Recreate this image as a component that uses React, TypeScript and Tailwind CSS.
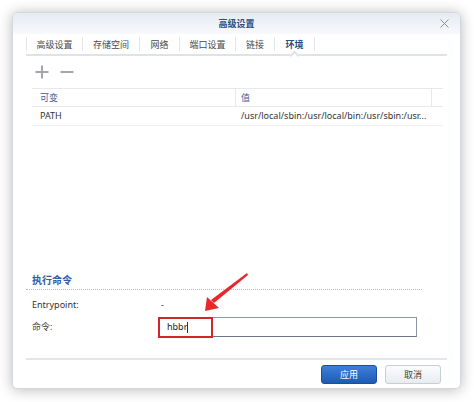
import React from 'react';

const font = { fontFamily: '"Noto Sans", "Noto Sans CJK SC", sans-serif' };

const tabs = [
  { label: '高级设置', w: 'w-[56px]' },
  { label: '存储空间', w: 'w-[57px]' },
  { label: '网络', w: 'w-[40px]' },
  { label: '端口设置', w: 'w-[56px]' },
  { label: '链接', w: 'w-[39px]' },
  { label: '环境', w: 'w-[40px]', active: true },
];

const Arrow = () => (
  <svg className="absolute left-0 top-0 pointer-events-none" width="474" height="402" viewBox="0 0 474 402">
    <polygon points="247,273 248,275 214,303 211,300" fill="#e8262b" />
    <polygon points="205,311 207,297 219,308" fill="#e8262b" />
  </svg>
);

export default function App() {
  return (
    <div className="relative w-[474px] h-[402px] bg-white pl-[12px] pt-[12px] text-[9px] text-[#333]" style={font}>
      <div className="flex flex-col w-[449px] h-[377px] rounded-[5px] bg-white border border-[#d3d8df] shadow-[0_1px_14px_rgba(0,0,0,0.28)] overflow-hidden">
        {/* title bar */}
        <div className="relative flex items-center justify-center h-[21px] shrink-0 bg-gradient-to-b from-[#e6ebf3] to-[#f7f9fc]">
          <span className="text-[9px] font-semibold text-[#2b4d80]">高级设置</span>
          <svg className="absolute right-[11px] top-[6px]" width="9" height="9" viewBox="0 0 9 9">
            <path d="M0.5 0.5 L8.5 8.5 M8.5 0.5 L0.5 8.5" stroke="#8c8f94" strokeWidth="1" />
          </svg>
        </div>

        {/* tabs */}
        <div className="flex items-center h-[22px] shrink-0 mx-[13px] border-b-2 border-[#dfe3e8]">
          <div className="w-px h-[14px] bg-[#e4e6ea]" />
          {tabs.map((t) => (
            <div key={t.label} className={`relative flex items-center h-full ${t.w}`}>
              <span className={`flex-1 text-center pt-[1px] ${t.active ? 'text-[#2a4b7c] font-semibold' : 'text-[#4a4a4a]'}`}>{t.label}</span>
              <div className="w-px h-[14px] bg-[#e4e6ea]" />
              {t.active && (
                <div className="absolute left-1/2 -bottom-[5px] -ml-[4px] w-[7px] h-[7px] rotate-45 bg-white border-l-2 border-t-2 border-[#dfe3e8]" />
              )}
            </div>
          ))}
        </div>

        {/* main */}
        <div className="flex-1 flex flex-col px-[19px]">
          <div className="flex items-center h-[32px] gap-[11px] pl-[3px]">
            <svg width="14" height="14" viewBox="0 0 14 14">
              <path d="M7 0.5 V13.5 M0.5 7 H13.5" stroke="#a3a6aa" strokeWidth="2" />
            </svg>
            <svg width="14" height="14" viewBox="0 0 14 14">
              <path d="M0.5 7 H13.5" stroke="#a3a6aa" strokeWidth="2" />
            </svg>
          </div>
          <div className="w-[411px]">
            <div className="flex h-[19px] border-t border-b border-[#e6e8eb] text-[#3d5d91]">
              <div className="flex items-center w-[204px] pl-[8px] border-r border-[#e6e8eb]">可变</div>
              <div className="flex items-center w-[196px] pl-[5px] border-r border-[#e6e8eb]">值</div>
              <div className="flex-1" />
            </div>
            <div className="flex h-[19px] border-b border-[#eceef0]">
              <div className="flex items-center w-[204px] pl-[8px]">PATH</div>
              <div className="flex items-center w-[196px] pl-[5px] whitespace-nowrap">/usr/local/sbin:/usr/local/bin:/usr/sbin:/usr...</div>
            </div>
          </div>
        </div>

        {/* command section */}
        <div className="shrink-0 mx-[13px]">
          <div className="flex items-center h-[18px] w-[396px] pl-[6px] border-b border-dotted border-[#b9c0c9] text-[10px] font-semibold text-[#2f5bb0]">
            执行命令
          </div>
          <div className="flex flex-col gap-[2px] mt-[5px] pl-[6px]">
            <div className="flex items-center h-[20px]">
              <span className="w-[129px]">Entrypoint:</span>
              <span>-</span>
            </div>
            <div className="flex items-center h-[20px]">
              <span className="w-[126px] text-[#444]">命令:</span>
              <div className="relative flex items-center w-[259px] h-[20px] border border-[#8a96a8] border-b-[#6c7787] bg-white">
                <div className="absolute -left-px -top-px w-[55px] h-[21px] border-2 border-[#d0262e]" />
                <span className="pl-[8px] text-[#222]">hbbr</span>
                <span className="w-px h-[11px] bg-[#333]" />
              </div>
            </div>
          </div>
        </div>

        {/* footer */}
        <div className="shrink-0 mt-[21px] mx-[13px] border-t-2 border-[#e3e6ea] flex justify-end gap-[8px] pt-[5px] pb-[4px] pr-[6px]">
          <button className="w-[56px] h-[19px] rounded-[3px] border border-[#1d4f9c] bg-gradient-to-b from-[#3d7fd8] to-[#1f5bb5] text-white text-[9px]">应用</button>
          <button className="w-[56px] h-[19px] rounded-[3px] border border-[#c8ced6] bg-gradient-to-b from-[#fbfcfd] to-[#e8ecf1] text-[#444] text-[9px]">取消</button>
        </div>
      </div>
      <Arrow />
    </div>
  );
}
